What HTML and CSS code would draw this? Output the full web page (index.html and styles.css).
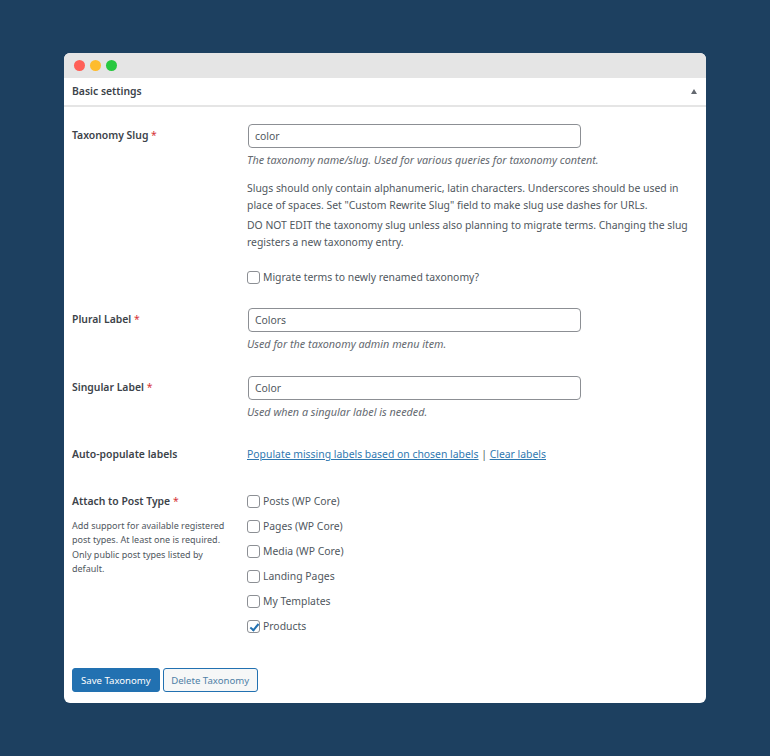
FILE: index.html
```html
<!DOCTYPE html>
<html>
<head>
    <title>Basic settings</title>
    <link rel="stylesheet" href="styles.css">
</head>
<body>
    <div class="window">
        <div class="titlebar">
            <span class="dot dot-red"></span>
            <span class="dot dot-yellow"></span>
            <span class="dot dot-green"></span>
        </div>
        <div class="panel-head">
            <h2>Basic settings</h2>
            <span class="toggle"></span>
        </div>
        <form class="form">
            <div class="row row-slug">
                <div class="label label-input">Taxonomy Slug <span class="req">*</span></div>
                <div class="field">
                    <input class="text" type="text" value="color">
                    <p class="desc">The taxonomy name/slug. Used for various queries for taxonomy content.</p>
                    <p class="note note-first">Slugs should only contain alphanumeric, latin characters. Underscores should be used in place of spaces. Set "Custom Rewrite Slug" field to make slug use dashes for URLs.</p>
                    <p class="note">DO NOT EDIT the taxonomy slug unless also planning to migrate terms. Changing the slug registers a new taxonomy entry.</p>
                    <label class="check check-migrate"><input type="checkbox"> Migrate terms to newly renamed taxonomy?</label>
                </div>
            </div>
            <div class="row row-plural">
                <div class="label label-input">Plural Label <span class="req">*</span></div>
                <div class="field">
                    <input class="text" type="text" value="Colors">
                    <p class="desc">Used for the taxonomy admin menu item.</p>
                </div>
            </div>
            <div class="row row-singular">
                <div class="label label-input">Singular Label <span class="req">*</span></div>
                <div class="field">
                    <input class="text" type="text" value="Color">
                    <p class="desc">Used when a singular label is needed.</p>
                </div>
            </div>
            <div class="row row-auto">
                <div class="label">Auto-populate labels</div>
                <div class="field links"><a href="#">Populate missing labels based on chosen labels</a> | <a href="#">Clear labels</a></div>
            </div>
            <div class="row row-attach">
                <div class="label">
                    Attach to Post Type <span class="req">*</span>
                    <p class="help">Add support for available registered post types. At least one is required. Only public post types listed by default.</p>
                </div>
                <div class="field checks">
                    <label class="check"><input type="checkbox"> Posts (WP Core)</label>
                    <label class="check"><input type="checkbox"> Pages (WP Core)</label>
                    <label class="check"><input type="checkbox"> Media (WP Core)</label>
                    <label class="check"><input type="checkbox"> Landing Pages</label>
                    <label class="check"><input type="checkbox"> My Templates</label>
                    <label class="check"><input type="checkbox" checked> Products</label>
                </div>
            </div>
            <div class="actions">
                <button class="btn btn-primary" type="button">Save Taxonomy</button>
                <button class="btn btn-secondary" type="button">Delete Taxonomy</button>
            </div>
        </form>
    </div>
</body>
</html>
```

FILE: styles.css
```css
html, body {
    margin: 0;
    height: 100%;
}
body {
    background-color: #1d4060;
    font-family: "Noto Sans", sans-serif;
    font-size: 10.4px;
    line-height: 17px;
    color: #50575e;
    padding: 53px 64px 0;
    box-sizing: border-box;
}
.window {
    width: 642px;
    height: 650px;
    background: white;
    border-radius: 6px;
    overflow: hidden;
}
.titlebar {
    height: 25px;
    background: #e5e5e5;
    display: flex;
    align-items: center;
    gap: 5px;
    padding-left: 10px;
}
.dot {
    width: 11px;
    height: 11px;
    border-radius: 50%;
}
.dot-red { background: #ff5f57; }
.dot-yellow { background: #febc2e; }
.dot-green { background: #28c840; }
.panel-head {
    height: 27px;
    border-bottom: 2px solid #e5e5e5;
    display: flex;
    align-items: center;
    justify-content: space-between;
    padding: 0 9px 0 8px;
}
.panel-head h2 {
    margin: -1px 0 0;
    font-size: 10.4px;
    font-weight: 600;
    color: #3c434a;
}
.toggle {
    width: 0;
    height: 0;
    border-left: 3px solid transparent;
    border-right: 3px solid transparent;
    border-bottom: 5px solid #646970;
}
.form {
    padding: 0 8px;
}
.row {
    display: grid;
    grid-template-columns: 175px 1fr;
}
.label {
    font-weight: 600;
    color: #3c434a;
    padding-right: 20px;
}
.label-input {
    padding-top: 3px;
}
.req {
    color: #d63638;
    font-weight: 400;
}
.text {
    display: block;
    box-sizing: border-box;
    width: 333px;
    height: 24px;
    margin: 0 0 0 1px;
    padding: 0 6px;
    border: 1px solid #8c8f94;
    border-radius: 4px;
    font-family: inherit;
    font-size: 10.4px;
    color: #50575e;
}
.desc {
    margin: 3px 0 0;
    font-size: 10.8px;
    font-style: italic;
    color: #646970;
}
.note {
    margin: 0;
    line-height: 17px;
}
.note-first {
    margin-top: 12px;
    margin-bottom: 3px;
}
.check {
    display: flex;
    align-items: center;
    gap: 3px;
    height: 17px;
}
.check input {
    width: 13px;
    height: 13px;
    margin: 0;
    appearance: none;
    background: white;
    border: 1px solid #8c8f94;
    border-radius: 3px;
    position: relative;
}
.check input:checked::after {
    content: "";
    position: absolute;
    left: 3.5px;
    top: 0.5px;
    width: 3px;
    height: 7px;
    border: solid #2271b1;
    border-width: 0 2px 2px 0;
    transform: rotate(40deg);
}
.check-migrate {
    margin-top: 18px;
}
.row-slug { margin-top: 17px; }
.row-plural { margin-top: 22px; }
.row-singular { margin-top: 24px; }
.row-auto { margin-top: 26px; }
.row-attach { margin-top: 30px; }
.links a {
    color: #2f78b0;
}
.help {
    margin: 9px 0 0;
    font-size: 9px;
    line-height: 14.3px;
    font-weight: 400;
    color: #50575e;
}
.checks {
    display: flex;
    flex-direction: column;
    gap: 8px;
}
.actions {
    margin-top: 33px;
    display: flex;
    gap: 3px;
}
.btn {
    height: 24px;
    padding: 0 8px;
    font-family: inherit;
    font-size: 9.6px;
    border-radius: 3px;
    border: 1px solid #2271b1;
}
.btn-primary {
    background: #2271b1;
    color: white;
}
.btn-secondary {
    padding: 0 7.5px;
    background: #f6f7f7;
    color: #4f80a6;
}
```
